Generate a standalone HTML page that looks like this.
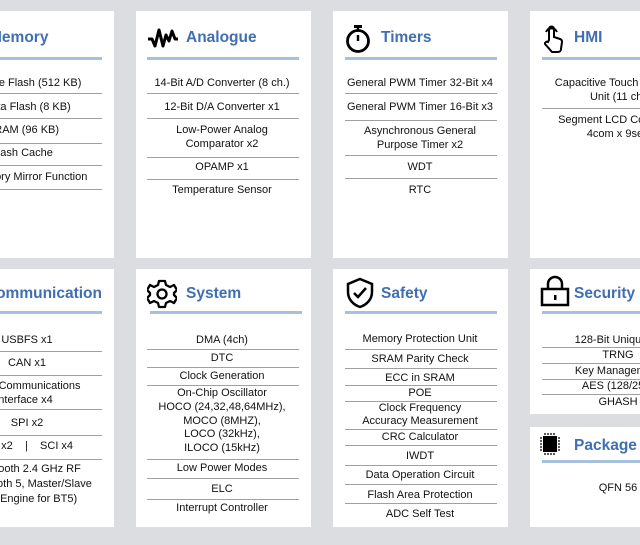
<html><head><style>
body{margin:0;width:640px;height:545px;background:#dcdde0;position:relative;overflow:hidden;font-family:"Liberation Sans",sans-serif}
#w{position:absolute;left:0;top:0;width:640px;height:545px;overflow:hidden}
.c{position:absolute;background:#fff}
.t{position:absolute;font-weight:bold;font-size:15.5px;color:#3f6fb2;line-height:20px;white-space:nowrap}
.r{position:absolute;height:3px;background:#a7c0de;width:152px}
.i{position:absolute;width:200px;text-align:center;font-size:11px;line-height:14px;color:#111;white-space:nowrap}
.l{position:absolute;height:1px;background:#a0a0a0;width:152px}
svg{position:absolute}
</style></head><body><div id="w">
<div class="c" style="left:0px;top:11px;width:114px;height:247px"></div>
<div class="c" style="left:136px;top:11px;width:175px;height:247px"></div>
<div class="c" style="left:333px;top:11px;width:175px;height:247px"></div>
<div class="c" style="left:530px;top:11px;width:110px;height:247px"></div>
<div class="c" style="left:0px;top:269px;width:114px;height:258px"></div>
<div class="c" style="left:136px;top:269px;width:175px;height:258px"></div>
<div class="c" style="left:333px;top:269px;width:175px;height:258px"></div>
<div class="c" style="left:530px;top:269px;width:110px;height:145px"></div>
<div class="c" style="left:530px;top:427px;width:110px;height:100px"></div>

<div class="t" style="left:-11px;top:28px">Memory</div>
<div class="t" style="left:186px;top:28px">Analogue</div>
<div class="t" style="left:381px;top:28px">Timers</div>
<div class="t" style="left:574px;top:28px">HMI</div>
<div class="t" style="right:538px;top:284px">Communication</div>
<div class="t" style="left:186px;top:284px">System</div>
<div class="t" style="left:381px;top:284px">Safety</div>
<div class="t" style="left:574px;top:284px">Security</div>
<div class="t" style="left:574px;top:436px">Package</div>

<div class="r" style="left:0px;top:57px;width:102px"></div>
<div class="r" style="left:147px;top:57px"></div>
<div class="r" style="left:345px;top:57px"></div>
<div class="r" style="left:542px;top:57px;width:98px"></div>
<div class="r" style="left:0px;top:311px;width:102px"></div>
<div class="r" style="left:150px;top:311px"></div>
<div class="r" style="left:345px;top:311px"></div>
<div class="r" style="left:542px;top:311px;width:98px"></div>
<div class="r" style="left:542px;top:460px;width:98px"></div>

<svg style="left:147px;top:27px" width="32" height="22" viewBox="0 0 32 22"><path d="M1 12 L5 12 L8 19 L12 3 L16 19 L19 8 L22 14 L25 4 L28 12 L31 12" fill="none" stroke="#000" stroke-width="3" stroke-linejoin="round"/></svg>
<svg style="left:345px;top:24px" width="26" height="30" viewBox="0 0 26 30"><circle cx="13" cy="17" r="10.5" fill="none" stroke="#000" stroke-width="2.8"/><rect x="9" y="1" width="8" height="3" fill="#000"/><rect x="11.8" y="4" width="2.4" height="3" fill="#000"/><rect x="11.8" y="11" width="2.4" height="6" fill="#000"/></svg>
<svg style="left:541px;top:24px" width="24" height="30" viewBox="0 0 24 30"><path d="M8 16 V5 a2.5 2.5 0 0 1 5 0 V13 l6 2 a3 3 0 0 1 2 3 l-1 7 a3 3 0 0 1 -3 3 H11 L4 20 a2 2 0 0 1 3 -2 Z M5 8 a6 6 0 0 1 11 0" fill="none" stroke="#000" stroke-width="2"/></svg>
<svg style="left:147px;top:279px" width="30" height="30" viewBox="0 0 30 30"><path d="M12 2h6l1 4 4 2 4-2 3 5-3 3v2l3 3-3 5-4-2-4 2-1 4h-6l-1-4-4-2-4 2-3-5 3-3v-2L0 11l3-5 4 2 4-2z" fill="none" stroke="#000" stroke-width="2.3" stroke-linejoin="round"/><circle cx="15" cy="15" r="4.5" fill="none" stroke="#000" stroke-width="2.3"/></svg>
<svg style="left:346px;top:277px" width="28" height="32" viewBox="0 0 28 32"><path d="M14 2 L26 7 V15 C26 23 20 28 14 30 C8 28 2 23 2 15 V7 Z" fill="none" stroke="#000" stroke-width="2.5"/><path d="M8 16 L12 20 L20 11" fill="none" stroke="#000" stroke-width="2.5"/></svg>
<svg style="left:540px;top:275px" width="30" height="32" viewBox="0 0 30 32"><path d="M8 14 V9 a7 7 0 0 1 14 0 V14" fill="none" stroke="#000" stroke-width="2.5"/><rect x="2" y="14" width="26" height="16" fill="none" stroke="#000" stroke-width="2.5"/><rect x="14" y="20" width="2.5" height="5" fill="#000"/></svg>
<svg style="left:539px;top:430px" width="22" height="30" viewBox="0 0 22 30"><rect x="4" y="6" width="14" height="16" fill="#000"/><path d="M6 3v2M9 3v2M12 3v2M15 3v2M6 23v2M9 23v2M12 23v2M15 23v2M1 8h2M1 11h2M1 14h2M1 17h2M1 20h2M19 8h2M19 11h2M19 14h2M19 17h2M19 20h2" stroke="#000" stroke-width="1.3"/></svg>

<div class="i" style="left:-70px;top:76px">Code Flash (512 KB)</div><div class="l" style="left:0px;top:93px;width:102px"></div>
<div class="i" style="left:-73px;top:100px">Data Flash (8 KB)</div><div class="l" style="left:0px;top:118px;width:102px"></div>
<div class="i" style="left:-77px;top:123px">SRAM (96 KB)</div><div class="l" style="left:0px;top:143px;width:102px"></div>
<div class="i" style="left:-78px;top:146px">Flash Cache</div><div class="l" style="left:0px;top:165px;width:102px"></div>
<div class="i" style="left:-71px;top:170px">Memory Mirror Function</div><div class="l" style="left:0px;top:189px;width:102px"></div>

<div class="i" style="left:122px;top:76px">14-Bit A/D Converter (8 ch.)</div><div class="l" style="left:147px;top:93px"></div>
<div class="i" style="left:122px;top:100px">12-Bit D/A Converter x1</div><div class="l" style="left:147px;top:118px"></div>
<div class="i" style="left:122px;top:123px">Low-Power Analog<br>Comparator x2</div><div class="l" style="left:147px;top:157px"></div>
<div class="i" style="left:122px;top:160px">OPAMP x1</div><div class="l" style="left:147px;top:179px"></div>
<div class="i" style="left:122px;top:183px">Temperature Sensor</div>

<div class="i" style="left:320px;top:76px">General PWM Timer 32-Bit x4</div><div class="l" style="left:345px;top:93px"></div>
<div class="i" style="left:320px;top:100px">General PWM Timer 16-Bit x3</div><div class="l" style="left:345px;top:120px"></div>
<div class="i" style="left:320px;top:124px">Asynchronous General<br>Purpose Timer x2</div><div class="l" style="left:345px;top:155px"></div>
<div class="i" style="left:320px;top:160px">WDT</div><div class="l" style="left:345px;top:178px"></div>
<div class="i" style="left:320px;top:183px">RTC</div>

<div class="i" style="left:518px;top:76px">Capacitive Touch Sensing<br>Unit (11 ch)</div><div class="l" style="left:542px;top:108px;width:98px"></div>
<div class="i" style="left:518px;top:113px">Segment LCD Controller<br>4com x 9seg</div>

<div class="i" style="left:-73px;top:333px">USBFS x1</div><div class="l" style="left:0px;top:351px;width:102px"></div>
<div class="i" style="left:-73px;top:356px">CAN x1</div><div class="l" style="left:0px;top:375px;width:102px"></div>
<div class="i" style="left:-76px;top:379px">Serial Communications<br>Interface x4</div><div class="l" style="left:0px;top:409px;width:102px"></div>
<div class="i" style="left:-73px;top:416px">SPI x2</div><div class="l" style="left:0px;top:435px;width:102px"></div>
<div class="i" style="left:-73px;top:439px">I2C x2 &nbsp; &nbsp;| &nbsp; &nbsp;SCI x4</div><div class="l" style="left:0px;top:459px;width:102px"></div>
<div class="i" style="left:-73px;top:462px;line-height:15px">Bluetooth 2.4 GHz RF<br>(Bluetooth 5, Master/Slave<br>Link Engine for BT5)</div>

<div class="i" style="left:122px;top:333px">DMA (4ch)</div><div class="l" style="left:147px;top:349px"></div>
<div class="i" style="left:122px;top:351px">DTC</div><div class="l" style="left:147px;top:367px"></div>
<div class="i" style="left:122px;top:369px">Clock Generation</div><div class="l" style="left:147px;top:385px"></div>
<div class="i" style="left:122px;top:387px;line-height:13.8px">On-Chip Oscillator<br>HOCO (24,32,48,64MHz),<br>MOCO (8MHZ),<br>LOCO (32kHz),<br>ILOCO (15kHz)</div><div class="l" style="left:147px;top:459px"></div>
<div class="i" style="left:122px;top:461px">Low Power Modes</div><div class="l" style="left:147px;top:478px"></div>
<div class="i" style="left:122px;top:482px">ELC</div><div class="l" style="left:147px;top:499px"></div>
<div class="i" style="left:122px;top:501px">Interrupt Controller</div>

<div class="i" style="left:320px;top:332px">Memory Protection Unit</div><div class="l" style="left:345px;top:349px"></div>
<div class="i" style="left:320px;top:352px">SRAM Parity Check</div><div class="l" style="left:345px;top:368px"></div>
<div class="i" style="left:320px;top:371px">ECC in SRAM</div><div class="l" style="left:345px;top:385px"></div>
<div class="i" style="left:320px;top:386px">POE</div><div class="l" style="left:345px;top:401px"></div>
<div class="i" style="left:320px;top:402px;line-height:12.5px">Clock Frequency<br>Accuracy Measurement</div><div class="l" style="left:345px;top:429px"></div>
<div class="i" style="left:320px;top:430px">CRC Calculator</div><div class="l" style="left:345px;top:445px"></div>
<div class="i" style="left:320px;top:449px">IWDT</div><div class="l" style="left:345px;top:465px"></div>
<div class="i" style="left:320px;top:468px">Data Operation Circuit</div><div class="l" style="left:345px;top:484px"></div>
<div class="i" style="left:320px;top:488px">Flash Area Protection</div><div class="l" style="left:345px;top:503px"></div>
<div class="i" style="left:320px;top:507px">ADC Self Test</div>

<div class="i" style="left:518px;top:333px">128-Bit Unique ID</div><div class="l" style="left:542px;top:347px;width:98px"></div>
<div class="i" style="left:518px;top:348px">TRNG</div><div class="l" style="left:542px;top:363px;width:98px"></div>
<div class="i" style="left:518px;top:364px">Key Management</div><div class="l" style="left:542px;top:379px;width:98px"></div>
<div class="i" style="left:518px;top:379px">AES (128/256)</div><div class="l" style="left:542px;top:394px;width:98px"></div>
<div class="i" style="left:518px;top:395px">GHASH</div>
<div class="i" style="left:518px;top:481px">QFN 56</div>
</div></body></html>
